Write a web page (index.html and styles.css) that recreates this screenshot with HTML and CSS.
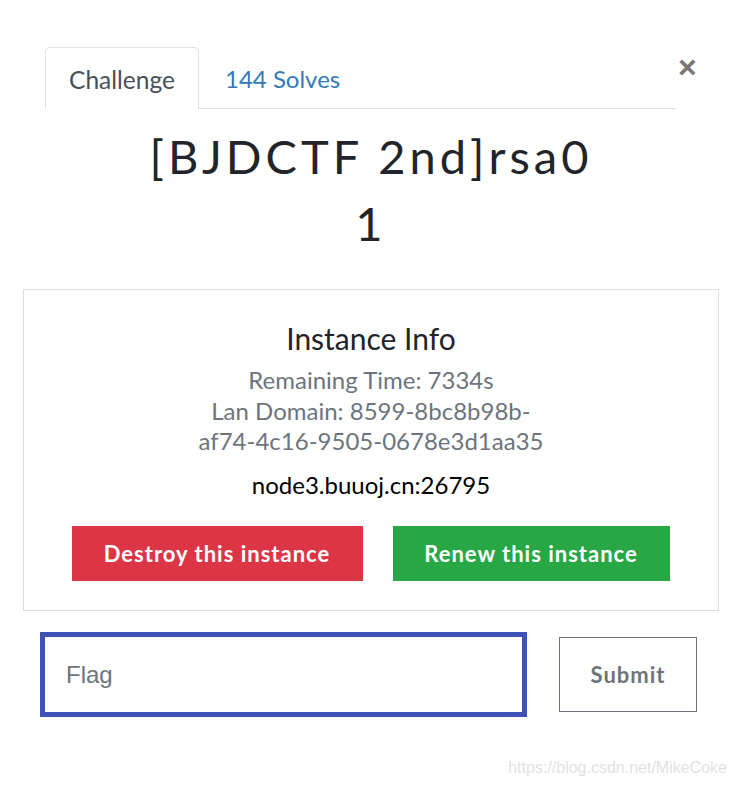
FILE: index.html
```html
<!DOCTYPE html>
<html>
<head>
<meta charset="utf-8">
<link rel="stylesheet" href="styles.css">
</head>
<body>
<div class="modal">
  <div class="header">
    <ul class="tabs">
      <li class="tab active">Challenge</li>
      <li class="tab link">144 Solves</li>
    </ul>
    <span class="close">&times;</span>
  </div>
  <div class="body">
    <h1 class="title">[BJDCTF 2nd]rsa0<br>1</h1>
    <div class="instance">
      <h2 class="inst-title">Instance Info</h2>
      <p class="muted">Remaining Time: 7334s<br>Lan Domain: 8599-8bc8b98b-<br>af74-4c16-9505-0678e3d1aa35</p>
      <p class="host">node3.buuoj.cn:26795</p>
      <div class="buttons">
        <button class="btn danger">Destroy this instance</button>
        <button class="btn success">Renew this instance</button>
      </div>
    </div>
  </div>
  <div class="form">
    <div class="flag"><span class="placeholder">Flag</span></div>
    <button class="submit">Submit</button>
  </div>
  <div class="watermark">https://blog.csdn.net/MikeCoke</div>
</div>
</body>
</html>
```
FILE: styles.css
```css
html, body {
  margin: 0;
  padding: 0;
  background: #fff;
}
.modal {
  width: 736px;
  height: 786px;
  font-family: Lato, "Liberation Sans", sans-serif;
  color: #212529;
}
.header {
  display: flex;
  align-items: flex-start;
  padding: 47px 0 0 45px;
}
.tabs {
  display: flex;
  list-style: none;
  margin: 0;
  padding: 0;
  width: 631px;
  height: 61px;
  border-bottom: 1px solid #dee2e6;
  box-sizing: content-box;
}
.tab {
  display: flex;
  align-items: center;
  justify-content: center;
  height: 60px;
  font-size: 24px;
  box-sizing: border-box;
}
.tab.active {
  width: 154px;
  height: 62px;
  color: #495057;
  border: 1px solid #dee2e6;
  border-bottom: none;
  border-radius: 5px 5px 0 0;
  background: #fff;
  padding-top: 2px;
  font-size: 24.5px;
}
.tab.link {
  color: #337ab7;
  padding: 2px 26px 0 26px;
}
.close {
  margin: 2px 0 0 2px;
  font-family: "Liberation Sans", sans-serif;
  font-size: 32px;
  font-weight: bold;
  color: #777;
  line-height: 36px;
}
.body {
  padding: 0 17px 0 23px;
}
.title {
  margin: 14px 0 0;
  text-align: center;
  font-family: Lato, sans-serif;
  font-weight: 400;
  font-size: 47px;
  line-height: 67px;
  letter-spacing: 4px;
  color: #212529;
}
.instance {
  margin-top: 32px;
  border: 1px solid #dddddd;
  height: 322px;
  box-sizing: border-box;
  text-align: center;
  padding-top: 28px;
}
.inst-title {
  margin: 0;
  font-weight: 400;
  font-size: 30px;
  line-height: 40px;
}
.muted {
  margin: 7px 0 0;
  color: #6c757d;
  font-size: 24px;
  line-height: 30.5px;
}
.host {
  margin: 13px 0 0;
  font-size: 24px;
  line-height: 30px;
  color: #000;
}
.buttons {
  display: flex;
  justify-content: center;
  gap: 30px;
  margin-top: 26px;
  padding-right: 1px;
}
.btn {
  border: none;
  color: #fff;
  font-family: Lato, sans-serif;
  font-weight: bold;
  font-size: 22px;
  letter-spacing: 1px;
  height: 55px;
  padding: 0;
}
.danger {
  background: #dc3545;
  width: 291px;
}
.success {
  background: #28a745;
  width: 277px;
}
.form {
  display: flex;
  align-items: center;
  gap: 32px;
  margin-top: 21px;
  padding-left: 40px;
}
.flag {
  width: 487px;
  height: 85px;
  border: 5px solid #3f51b5;
  box-sizing: border-box;
  display: flex;
  align-items: center;
  padding-left: 21px;
}
.placeholder {
  font-family: "Liberation Sans", Arial, sans-serif;
  font-size: 24px;
  color: #6c757d;
}
.submit {
  width: 138px;
  height: 75px;
  background: #fff;
  border: 1px solid #6c757d;
  color: #6c757d;
  font-family: Lato, sans-serif;
  font-weight: bold;
  font-size: 22px;
  letter-spacing: 1px;
  padding: 0;
}
.watermark {
  margin-top: 42px;
  text-align: right;
  padding-right: 9px;
  font-family: "Liberation Sans", Arial, sans-serif;
  font-size: 16px;
  color: #e2e2e2;
}
```
